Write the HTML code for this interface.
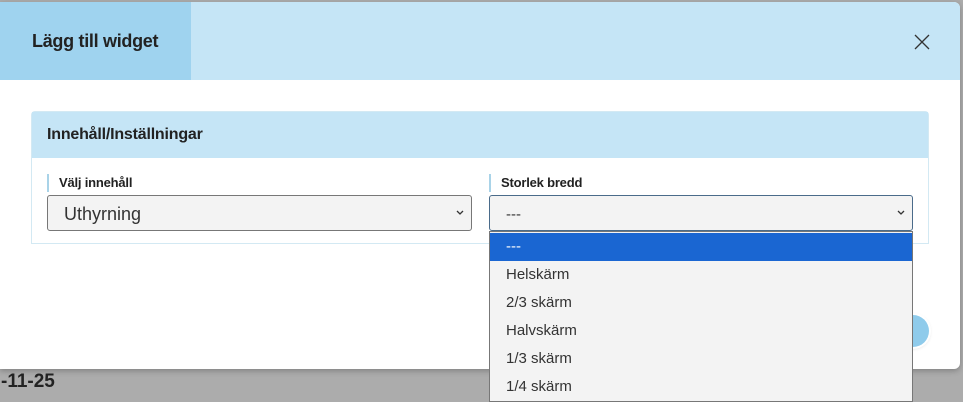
<!DOCTYPE html>
<html><head><meta charset="utf-8"><style>
*{box-sizing:border-box;margin:0;padding:0}
body{width:963px;height:402px;overflow:hidden;background:#acacac;font-family:"Liberation Sans",sans-serif;position:relative}
.modal{position:absolute;left:0;top:2px;width:960px;height:367px;background:#fff;border-radius:0 6px 6px 0;box-shadow:0 2px 6px rgba(0,0,0,.25);overflow:hidden}
.hdr{position:absolute;left:0;top:0;width:960px;height:78px;background:#c5e5f6}
.hdr .l{position:absolute;left:0;top:0;width:191px;height:78px;background:#9fd3ef}
.title{position:absolute;left:32px;top:29px;font-size:18px;font-weight:bold;color:#222;letter-spacing:-0.3px}
.x{position:absolute;left:913px;top:31px}
.panel{position:absolute;left:31px;top:109px;width:898px;height:133px;border:1px solid #d3e9f3;border-radius:4px 4px 0 0}
.ph{height:46px;background:#c5e5f6;padding:14px 15px;font-size:16px;font-weight:bold;color:#222;letter-spacing:-0.2px}
.lab{position:absolute;top:172px;font-size:13px;font-weight:bold;color:#222;border-left:2px solid #a9d3e8;padding-left:10px;height:18px;line-height:18px;letter-spacing:-0.2px}
.sel{position:absolute;top:193px;height:36px;background:#f3f3f3;border:1px solid #777;border-radius:3px;font-size:18px;color:#333;padding:8px 0 0 16px}
.sel svg{position:absolute;right:7px;top:14px}
.list{position:absolute;left:489px;top:231px;width:424px;height:171px;background:#f3f3f3;border:1px solid #777;z-index:3;padding-top:1px}
.it{height:28px;line-height:28px;padding-left:16px;font-size:15px;color:#333}
.it.a{background:#1a66d2;color:#fff}
.circ{position:absolute;left:897px;top:313px;width:32px;height:32px;border-radius:50%;background:#8fcbeb;box-shadow:0 0 0 2px #fff,0 1px 4px rgba(0,0,0,.2)}
.date{position:absolute;left:1px;top:371px;font-size:19px;font-weight:bold;color:#222;font-family:"Liberation Sans",sans-serif}
</style></head><body>
<div class="modal">
<div class="hdr"><div class="l"></div><div class="title">Lägg till widget</div>
<svg class="x" width="18" height="18" viewBox="0 0 18 18"><path d="M2 2L16 16M16 2L2 16" stroke="#333" stroke-width="1.3"/></svg></div>
<div class="panel"><div class="ph">Innehåll/Inställningar</div></div>
<div class="lab" style="left:47px">Välj innehåll</div>
<div class="lab" style="left:489px">Storlek bredd</div>
<div class="sel" style="left:47px;width:425px">Uthyrning<svg width="8" height="6" viewBox="0 0 8 6"><path d="M1 1L4 4L7 1" stroke="#333" stroke-width="1.3" fill="none"/></svg></div>
<div class="sel" style="left:489px;width:424px;font-size:15px;padding-top:10px;border-color:#4a6b8a">---<svg width="8" height="6" viewBox="0 0 8 6"><path d="M1 1L4 4L7 1" stroke="#333" stroke-width="1.3" fill="none"/></svg></div>
<div class="circ"></div>
</div>
<div class="list">
<div class="it a">---</div><div class="it">Helskärm</div><div class="it">2/3 skärm</div><div class="it">Halvskärm</div><div class="it">1/3 skärm</div><div class="it">1/4 skärm</div>
</div>
<div class="date">-11-25</div>
</body></html>
